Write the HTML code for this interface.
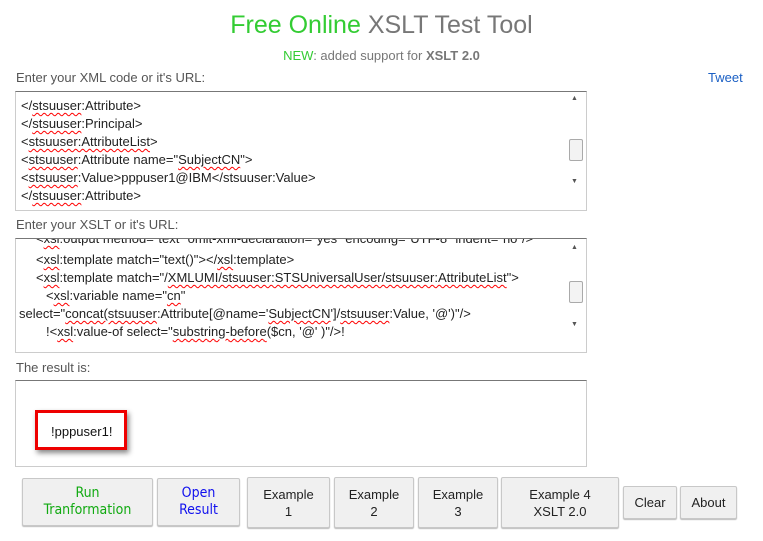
<!DOCTYPE html>
<html><head><style>
body{margin:0;width:763px;height:541px;background:#fff;font-family:"Liberation Sans",sans-serif;position:relative;overflow:hidden}
.a{position:absolute}
.lbl{font-size:13px;color:#555}
.ta{position:absolute;left:15px;width:570px;border:1px solid #ccc;border-top:1px solid #777;background:#fff;overflow:hidden;font-size:13px;color:#222}
.ln{position:absolute;left:5px;white-space:pre}
.sp{text-decoration:underline wavy red;text-decoration-thickness:1px;text-underline-offset:2px}
.sb{position:absolute;right:2px;top:0;width:17px;bottom:0}
.thumb{position:absolute;left:2px;width:12px;height:20px;border:1px solid #aaa;border-radius:2px;background:#f3f3f3}
.btn{position:absolute;background:#f0f0f0;border:1px solid #c8c8c8;border-radius:2px;box-shadow:0 1px 1px #bbb;font-size:13px;text-align:center;display:flex;align-items:center;justify-content:center;line-height:17px;color:#222}
</style></head><body>
<div class="a" style="left:0;width:763px;top:11px;text-align:center;font-size:25px;color:#777"><span style="color:#3c3">Free Online</span> XSLT Test Tool</div>
<div class="a" style="left:0;width:763px;top:48px;text-align:center;font-size:13px;color:#777"><span style="color:#3c3">NEW</span>: added support for <b>XSLT 2.0</b></div>
<div class="a lbl" style="left:16px;top:70px">Enter your XML code or it's URL:</div>
<div class="a" style="left:708px;top:70px;font-size:13px;color:#1a5fc4">Tweet</div>
<div class="ta" style="top:91px;height:118px">
<div class="ln" style="top:-6px;color:red;font-size:9px;left:14px">· · · · · · · ·           · · · ·                                             · · · · · · · ·</div>
<div class="ln" style="top:6px">&lt;/<span class="sp">stsuuser</span>:Attribute&gt;</div>
<div class="ln" style="top:24px">&lt;/<span class="sp">stsuuser</span>:Principal&gt;</div>
<div class="ln" style="top:42px">&lt;<span class="sp">stsuuser:AttributeList</span>&gt;</div>
<div class="ln" style="top:60px">&lt;<span class="sp">stsuuser</span>:Attribute name="<span class="sp">SubjectCN</span>"&gt;</div>
<div class="ln" style="top:78px">&lt;<span class="sp">stsuuser</span>:Value&gt;pppuser1@IBM&lt;/stsuuser:Value&gt;</div>
<div class="ln" style="top:96px">&lt;/<span class="sp">stsuuser</span>:Attribute&gt;</div>
<div class="sb"><div class="a" style="top:3px;left:4px;font-size:7px;color:#555">▲</div><div class="thumb" style="top:47px"></div><div class="a" style="top:86px;left:4px;font-size:7px;color:#555">▼</div></div>
</div>
<div class="a lbl" style="left:16px;top:217px">Enter your XSLT or it's URL:</div>
<div class="ta" style="top:238px;height:113px">
<div class="ln" style="top:-8px;left:20px">&lt;<span class="sp">xsl</span>:output method="text" omit-xml-declaration="yes" encoding="UTF-8" indent="no"/&gt;</div>
<div class="ln" style="top:13px;left:20px">&lt;<span class="sp">xsl</span>:template match="text()"&gt;&lt;/<span class="sp">xsl</span>:template&gt;</div>
<div class="ln" style="top:31px;left:20px">&lt;<span class="sp">xsl</span>:template match="/<span class="sp">XMLUMI/stsuuser:STSUniversalUser/stsuuser:AttributeList</span>"&gt;</div>
<div class="ln" style="top:49px;left:30px">&lt;<span class="sp">xsl</span>:variable name="<span class="sp">cn</span>"</div>
<div class="ln" style="top:67px;left:3px">select="<span class="sp">concat(stsuuser</span>:Attribute[@name='<span class="sp">SubjectCN</span>']/<span class="sp">stsuuser</span>:Value, '@')"/&gt;</div>
<div class="ln" style="top:85px;left:30px">!&lt;<span class="sp">xsl</span>:value-of select="<span class="sp">substring-before</span>($cn, '@' )"/&gt;!</div>
<div class="sb"><div class="a" style="top:5px;left:4px;font-size:7px;color:#555">▲</div><div class="thumb" style="top:42px"></div><div class="a" style="top:82px;left:4px;font-size:7px;color:#555">▼</div></div>
</div>
<div class="a lbl" style="left:16px;top:360px">The result is:</div>
<div class="ta" style="top:380px;height:85px">
<div class="a" style="left:19px;top:29px;width:86px;height:34px;border:3px solid #e00;box-shadow:2px 3px 5px #888;background:#fff"></div>
<div class="a" style="left:35px;top:43px;font-size:13px;color:#111">!pppuser1!</div>
</div>
<div class="btn" style="left:22px;top:478px;width:129px;height:46px;color:#1a1;font-size:14px;font-family:'DejaVu Sans Condensed','Liberation Sans',sans-serif">Run<br>Tranformation</div>
<div class="btn" style="left:157px;top:478px;width:81px;height:46px;color:#11e;font-size:14px;font-family:'DejaVu Sans Condensed','Liberation Sans',sans-serif">Open<br>Result</div>
<div class="btn" style="left:247px;top:477px;width:81px;height:49px">Example<br>1</div>
<div class="btn" style="left:334px;top:477px;width:78px;height:49px">Example<br>2</div>
<div class="btn" style="left:418px;top:477px;width:78px;height:49px">Example<br>3</div>
<div class="btn" style="left:501px;top:477px;width:116px;height:49px">Example 4<br>XSLT 2.0</div>
<div class="btn" style="left:623px;top:486px;width:52px;height:31px">Clear</div>
<div class="btn" style="left:680px;top:486px;width:55px;height:31px">About</div>
</body></html>
